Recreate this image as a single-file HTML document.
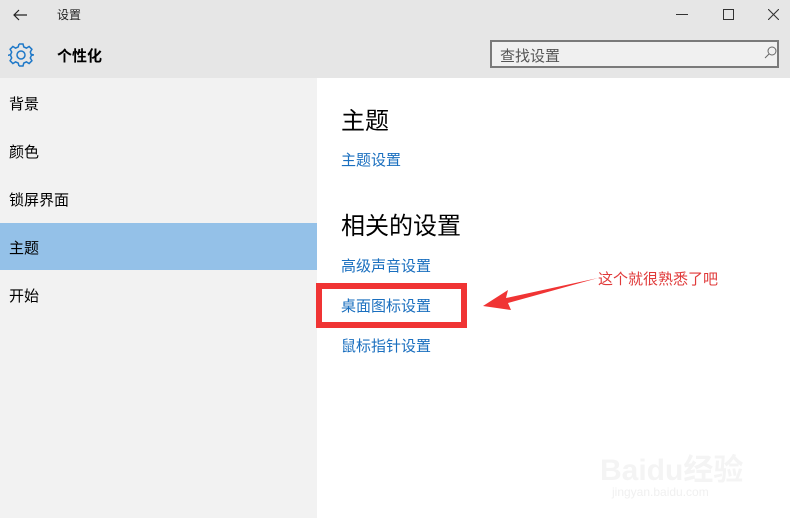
<!DOCTYPE html>
<html><head><meta charset="utf-8"><style>
body{margin:0;width:790px;height:518px;overflow:hidden;position:relative;background:#fff;font-family:"Liberation Sans","Noto Sans CJK SC",sans-serif}
.a{position:absolute;white-space:nowrap}
.hdr{position:absolute;left:0;top:0;width:790px;height:78px;background:#e6e6e6}
.side{position:absolute;left:0;top:78px;width:317px;height:440px;background:#f2f2f2}
.it{position:absolute;left:9px;font-size:15px;color:#000}
.lk{position:absolute;left:341px;font-size:15px;color:#1a6fbf}
</style></head><body>
<div class="hdr"></div>
<svg class="a" style="left:12px;top:8px" width="16" height="14"><path d="M15 7H2M7 2L2 7l5 5" fill="none" stroke="#222" stroke-width="1.2"/></svg>
<div class="a" style="left:57px;top:6px;font-size:12px;color:#222">设置</div>
<div class="a" style="left:676px;top:14px;width:12px;height:1px;background:#333"></div>
<div class="a" style="left:723px;top:9px;width:9px;height:9px;border:1px solid #333"></div>
<svg class="a" style="left:768px;top:9px" width="11" height="11"><path d="M0 0L11 11M11 0L0 11" stroke="#333" stroke-width="1.1"/></svg>
<svg class="a" style="left:8px;top:42px" width="26" height="26" viewBox="0 0 26 26"><g fill="none" stroke="#1e78c8" stroke-width="1.5"><circle cx="13" cy="13" r="4"/><path d="M11 2h4l.8 3 2.6 1.1 2.7-1.6 2.8 2.8-1.6 2.7L23 12.2l3 .8v0M11 2l-.8 3-2.6 1.1L4.9 4.5 2.1 7.3l1.6 2.7L2.6 12.6 0 13.4M2.5 13.2v0M11 24h4l.8-3 2.6-1.1 2.7 1.6 2.8-2.8-1.6-2.7 1.1-2.6 1.6-.4M11 24l-.8-3-2.6-1.1-2.7 1.6-2.8-2.8 1.6-2.7L2.6 13.4"/></g></svg>
<div class="a" style="left:57px;top:45px;font-size:15px;font-weight:bold;color:#000">个性化</div>
<div class="a" style="left:490px;top:40px;width:289px;height:28px;border:2px solid #7a7a7a;background:#f0f0f0;box-sizing:border-box"></div>
<div class="a" style="left:500px;top:45px;font-size:15px;color:#555">查找设置</div>
<svg class="a" style="left:764px;top:46px" width="13" height="13"><circle cx="8" cy="5" r="4" fill="none" stroke="#666"/><path d="M5 8L1 12" stroke="#666"/></svg>
<div class="side"></div>
<div class="a" style="left:0;top:223px;width:317px;height:47px;background:#94c1e8"></div>
<div class="it" style="top:93px">背景</div>
<div class="it" style="top:141px">颜色</div>
<div class="it" style="top:189px">锁屏界面</div>
<div class="it" style="top:237px">主题</div>
<div class="it" style="top:285px">开始</div>
<div class="a" style="left:341px;top:101px;font-size:24px;color:#000">主题</div>
<div class="lk" style="top:149px">主题设置</div>
<div class="a" style="left:341px;top:206px;font-size:24px;color:#000">相关的设置</div>
<div class="lk" style="top:255px">高级声音设置</div>
<div class="lk" style="top:295px">桌面图标设置</div>
<div class="lk" style="top:335px">鼠标指针设置</div>
<div class="a" style="left:316px;top:283px;width:151px;height:45px;border:6px solid #f03434;box-sizing:border-box"></div>
<svg class="a" style="left:478px;top:270px" width="125" height="45"><path d="M120 8 L28 28 L30 20 L5 36 L33 40 L30 33 Z" fill="#f03434"/></svg>
<div class="a" style="left:598px;top:268px;font-size:15px;color:#e03a3a">这个就很熟悉了吧</div>
<div class="a" style="left:600px;top:445px;font-size:30px;color:#f4f4f4;font-weight:bold">Baidu经验</div>
<div class="a" style="left:612px;top:485px;font-size:12px;color:#f0f0f0">jingyan.baidu.com</div>
</body></html>
